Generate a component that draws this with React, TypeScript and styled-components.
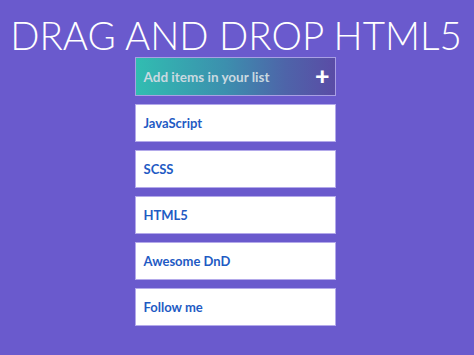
import React from "react";
import styled, { createGlobalStyle } from "styled-components";

const Global = createGlobalStyle`
  html, body { margin: 0; padding: 0; background: #6a5acd; }
  body { font-family: "Lato", "Open Sans", sans-serif; }
`;

const Page = styled.div`
  display: flex;
  flex-direction: column;
  align-items: center;
  padding-top: 13px;
`;

const Title = styled.h1`
  margin: 0 0 0 -2px;
  font-family: "Lato", sans-serif;
  font-weight: 300;
  font-size: 38.5px;
  line-height: 44px;
  letter-spacing: 0;
  color: #ffffff;
  white-space: nowrap;
`;

const List = styled.div`
  width: 201px;
  margin-top: 0;
  margin-right: 4px;
  display: flex;
  flex-direction: column;
  gap: 8px;
`;

const Header = styled.div`
  height: 39px;
  box-sizing: border-box;
  border: 1px solid #a99fe4;
  background: linear-gradient(90deg, #31bdb1 0%, #3c8fae 45%, #4e64a9 75%, #5a4ca6 100%);
  display: flex;
  align-items: center;
  justify-content: space-between;
  padding: 0 5px 0 8px;
`;

const HeaderText = styled.span`
  color: #c9d9e0;
  font-weight: 700;
  font-size: 13.5px;
`;

const Plus = styled.span`
  color: #ffffff;
  font-weight: 900;
  font-size: 25px;
  line-height: 1;
  margin-top: -3px;
`;

const Item = styled.div`
  height: 38px;
  box-sizing: border-box;
  background: #ffffff;
  border: 1px solid #b3a9ea;
  display: flex;
  align-items: center;
  padding-left: 8px;
  color: #1f5bc4;
  font-weight: 700;
  font-size: 13px;
`;

const items = ["JavaScript", "SCSS", "HTML5", "Awesome DnD", "Follow me"];

export default function App() {
  return (
    <>
      <Global />
      <Page>
        <Title>DRAG AND DROP HTML5</Title>
        <List>
          <Header>
            <HeaderText>Add items in your list</HeaderText>
            <Plus>+</Plus>
          </Header>
          {items.map((t) => (
            <Item key={t}>{t}</Item>
          ))}
        </List>
      </Page>
    </>
  );
}
